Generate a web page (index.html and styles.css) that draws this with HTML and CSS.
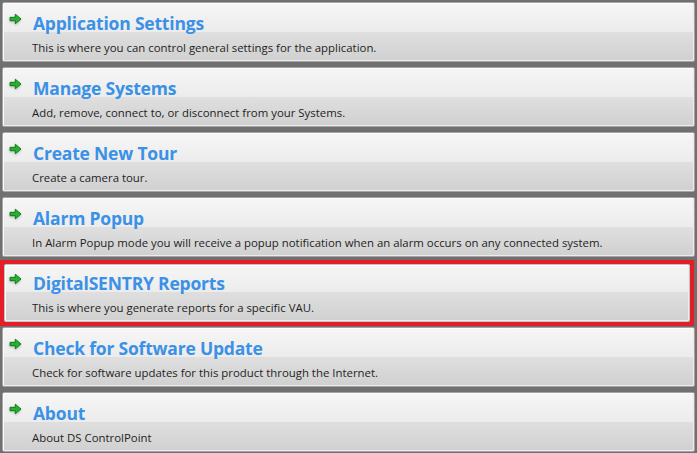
FILE: index.html
```html
<!DOCTYPE html>
<html>
<head>
<meta charset="utf-8">
<link rel="stylesheet" href="styles.css">
</head>
<body>
<div class="list">
  <div class="item"><div class="card">
    <div class="head"><svg class="arrow" viewBox="0 0 13 12"><path d="M1 4.3h5.3V1.2L12 6l-5.7 4.8V7.7H1z" fill="#22b52c" stroke="#0b7314" stroke-width="0.9" stroke-linejoin="round"/></svg><span class="title">Application Settings</span></div>
    <div class="desc">This is where you can control general settings for the application.</div>
  </div></div>
  <div class="item"><div class="card">
    <div class="head"><svg class="arrow" viewBox="0 0 13 12"><path d="M1 4.3h5.3V1.2L12 6l-5.7 4.8V7.7H1z" fill="#22b52c" stroke="#0b7314" stroke-width="0.9" stroke-linejoin="round"/></svg><span class="title">Manage Systems</span></div>
    <div class="desc">Add, remove, connect to, or disconnect from your Systems.</div>
  </div></div>
  <div class="item"><div class="card">
    <div class="head"><svg class="arrow" viewBox="0 0 13 12"><path d="M1 4.3h5.3V1.2L12 6l-5.7 4.8V7.7H1z" fill="#22b52c" stroke="#0b7314" stroke-width="0.9" stroke-linejoin="round"/></svg><span class="title">Create New Tour</span></div>
    <div class="desc">Create a camera tour.</div>
  </div></div>
  <div class="item"><div class="card">
    <div class="head"><svg class="arrow" viewBox="0 0 13 12"><path d="M1 4.3h5.3V1.2L12 6l-5.7 4.8V7.7H1z" fill="#22b52c" stroke="#0b7314" stroke-width="0.9" stroke-linejoin="round"/></svg><span class="title">Alarm Popup</span></div>
    <div class="desc">In Alarm Popup mode you will receive a popup notification when an alarm occurs on any connected system.</div>
  </div></div>
  <div class="item selected"><div class="card">
    <div class="head"><svg class="arrow" viewBox="0 0 13 12"><path d="M1 4.3h5.3V1.2L12 6l-5.7 4.8V7.7H1z" fill="#22b52c" stroke="#0b7314" stroke-width="0.9" stroke-linejoin="round"/></svg><span class="title">DigitalSENTRY Reports</span></div>
    <div class="desc">This is where you generate reports for a specific VAU.</div>
  </div></div>
  <div class="item"><div class="card">
    <div class="head"><svg class="arrow" viewBox="0 0 13 12"><path d="M1 4.3h5.3V1.2L12 6l-5.7 4.8V7.7H1z" fill="#22b52c" stroke="#0b7314" stroke-width="0.9" stroke-linejoin="round"/></svg><span class="title">Check for Software Update</span></div>
    <div class="desc">Check for software updates for this product through the Internet.</div>
  </div></div>
  <div class="item"><div class="card">
    <div class="head"><svg class="arrow" viewBox="0 0 13 12"><path d="M1 4.3h5.3V1.2L12 6l-5.7 4.8V7.7H1z" fill="#22b52c" stroke="#0b7314" stroke-width="0.9" stroke-linejoin="round"/></svg><span class="title">About</span></div>
    <div class="desc">About DS ControlPoint</div>
  </div></div>
</div>
</body>
</html>
```
FILE: styles.css
```css
html, body {
  margin: 0;
  padding: 0;
  background: #707070;
  width: 697px;
  height: 453px;
  overflow: hidden;
}
.list {
  display: flex;
  flex-direction: column;
  gap: 1px;
}
.item {
  padding: 2px;
  height: 64px;
  box-sizing: border-box;
  flex: none;
}
.card {
  box-sizing: border-box;
  height: 60px;
  border: 1px solid #a4a4a4;
  border-radius: 2px;
  background: linear-gradient(#f6f6f6, #ececec 29px, #dfdfdf 29px, #d0d0d0);
  box-shadow: inset 1px 1px 0 #fdfdfd, inset -1px -1px 0 #ececec;
  font-family: "Open Sans", "Noto Sans", sans-serif;
  overflow: hidden;
}
.head {
  display: flex;
  align-items: flex-start;
  padding-top: 9px;
  padding-left: 6px;
  height: 22px;
}
.arrow {
  width: 13px;
  height: 12px;
  margin-top: 1px;
  margin-right: 11px;
  flex: none;
  filter: drop-shadow(0 1px 1px rgba(0,0,0,0.25));
}
.title {
  font-size: 17.5px;
  font-weight: 700;
  color: #3a91e6;
  line-height: 22px;
  letter-spacing: -0.2px;
  white-space: nowrap;
}
.desc {
  margin-top: 7px;
  font-size: 11.4px;
  line-height: 14px;
  color: #1e1e1e;
  padding-left: 29px;
  white-space: nowrap;
}
.item.selected {
  padding: 0;
  border: 4px solid #e31e26;
  height: 66px;
  margin-right: 3px;
  margin-bottom: -2px;
}
.selected .card {
  height: 58px;
  border-color: #c4c4c4;
  background: linear-gradient(#f6f6f6, #ececec 27px, #dfdfdf 27px, #d0d0d0);
}
.selected .head {
  padding-top: 7px;
  padding-left: 4px;
}
.selected .desc {
  padding-left: 27px;
}
```
